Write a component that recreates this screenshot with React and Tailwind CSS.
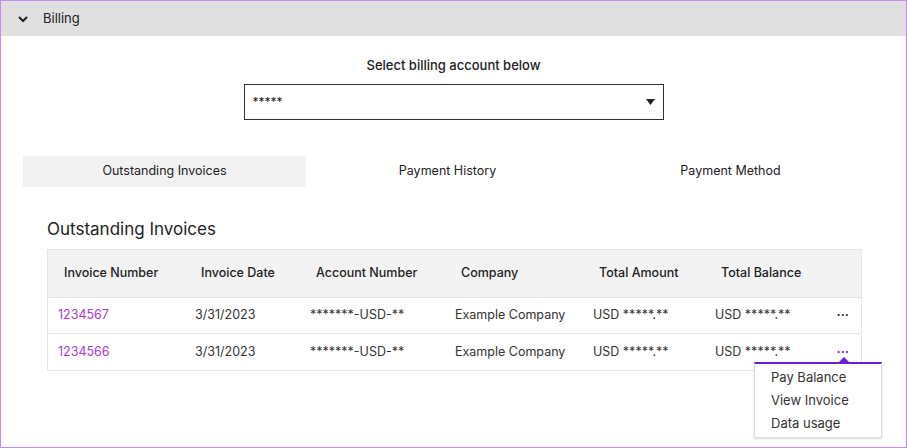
export default function App() {
  const rows = ["1234567", "1234566"];
  const cols = "grid grid-cols-[137px_115px_145px_138px_122px_118px_1fr]";
  return (
    <div className="w-[907px] h-[448px] border border-[#c38cf0] bg-white text-[#222] overflow-hidden" style={{ fontFamily: "Inter, 'Noto Sans', sans-serif" }}>
      <div className="h-[35px] bg-[#e0e0e0] flex items-center pl-[16px] gap-[14px] text-[13px]">
        <svg width="12" height="12" viewBox="0 0 12 12"><path d="M2 4l4 4 4-4" stroke="#222" strokeWidth="2" fill="none" /></svg>
        <span>Billing</span>
      </div>
      <div className="flex flex-col items-center pt-[20px]">
        <div className="text-[13px] font-medium">Select billing account below</div>
        <div className="mt-[8px] w-[420px] h-[36px] border border-[#333] flex items-center justify-between px-[8px] text-[12px]">
          <span>*****</span>
          <svg width="9" height="6" viewBox="0 0 9 6"><path d="M0 0h9L4.5 6z" fill="#222" /></svg>
        </div>
      </div>
      <div className="ml-[22px] mt-[36px] flex w-[849px] text-[12.5px]">
        <div className="flex-1 h-[31px] bg-[#f2f2f2] flex items-center justify-center">Outstanding Invoices</div>
        <div className="flex-1 h-[31px] flex items-center justify-center">Payment History</div>
        <div className="flex-1 h-[31px] flex items-center justify-center">Payment Method</div>
      </div>
      <div className="ml-[46px] mt-[30px] text-[17px]">Outstanding Invoices</div>
      <div className="relative ml-[46px] mt-[7px] w-[815px] border border-[#e4e4e4] text-[12.5px]">
        <div className={`${cols} h-[48px] items-center bg-[#f3f3f3] font-medium border-b border-[#e4e4e4]`}>
          <span className="pl-[16px]">Invoice Number</span>
          <span className="pl-[16px]">Invoice Date</span>
          <span className="pl-[16px]">Account Number</span>
          <span className="pl-[16px]">Company</span>
          <span className="pl-[16px]">Total Amount</span>
          <span className="pl-[16px]">Total Balance</span>
          <span></span>
        </div>
        {rows.map((r, i) => (
          <div key={r} className={`${cols} h-[36px] items-center text-[#333] ${i === 0 ? "border-b border-[#e4e4e4]" : ""}`}>
            <span className="pl-[10px] text-[#a53bd6]">{r}</span>
            <span className="pl-[10px]">3/31/2023</span>
            <span className="pl-[10px]">*******-USD-**</span>
            <span className="pl-[10px]">Example Company</span>
            <span className="pl-[10px]">USD *****.**</span>
            <span className="pl-[10px]">USD *****.**</span>
            <span className={`text-right pr-[12px] font-bold leading-none ${i === 1 ? "text-[#6a1fd1]" : ""}`}>···</span>
          </div>
        ))}
        <div className="absolute left-[706px] top-[112px] w-[128px] bg-white border border-[#ddd] border-t-2 border-t-[#6a1fd1] shadow-sm py-[2px] text-[13px] text-[#333]">
          <div className="absolute -top-[7px] left-[84px] w-0 h-0 border-l-[5px] border-r-[5px] border-b-[5px] border-l-transparent border-r-transparent border-b-[#6a1fd1]"></div>
          <div className="pl-[16px] h-[23px] flex items-center">Pay Balance</div>
          <div className="pl-[16px] h-[23px] flex items-center">View Invoice</div>
          <div className="pl-[16px] h-[23px] flex items-center">Data usage</div>
        </div>
      </div>
    </div>
  );
}
